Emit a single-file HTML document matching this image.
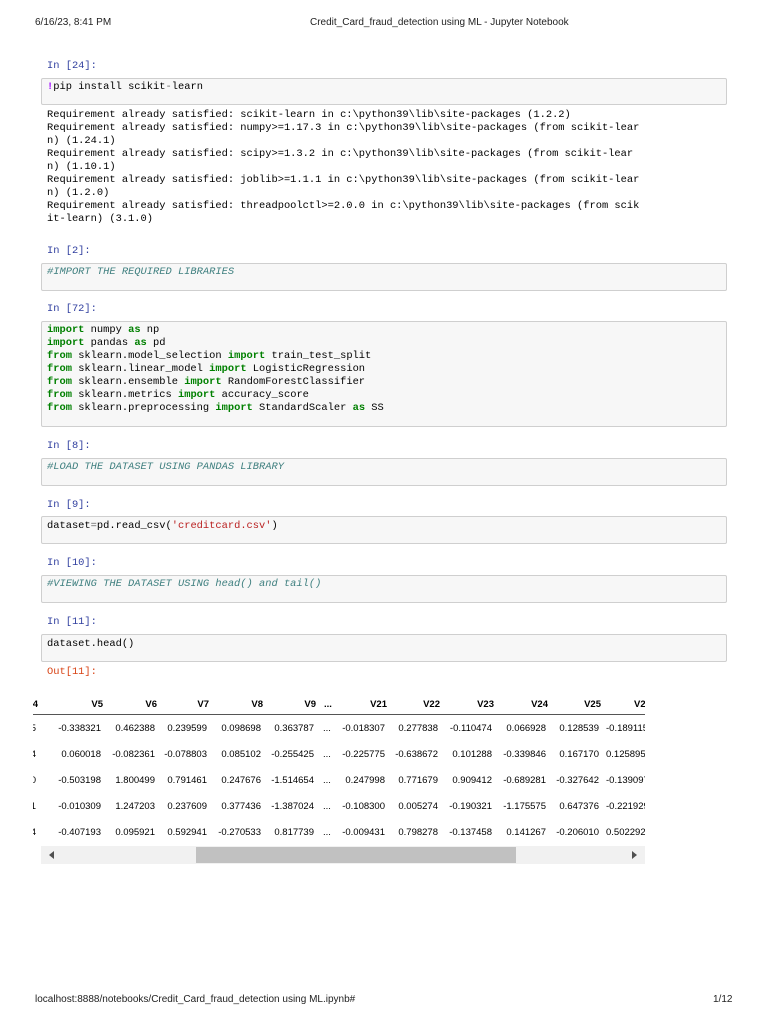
<!DOCTYPE html>
<html><head><meta charset="utf-8"><style>
body{margin:0;width:768px;height:1024px;background:#fff;position:relative;overflow:hidden;font-family:"Liberation Sans",sans-serif}
.a{position:absolute}
.hd{font-size:10px;color:#222;top:17px}
.lbl{position:absolute;left:47px;font-family:"Liberation Mono",monospace;font-size:10.4px;color:#303F9F;line-height:13px}
.box{position:absolute;left:41px;width:684px;border:1px solid #cfcfcf;background:#f7f7f7;border-radius:2px}
.code{position:absolute;left:47px;font-family:"Liberation Mono",monospace;font-size:10.4px;line-height:13px;color:#000;white-space:pre}
.k{color:#008000;font-weight:bold}.c{color:#408080;font-style:italic}.s{color:#BA2121}.p{color:#AA22FF;font-weight:bold}.o{color:#666}
table{border-collapse:collapse;font-size:9.5px;position:absolute;left:0;top:0;table-layout:fixed;width:668px}
td,th{text-align:right;height:26px;padding:0 2px 0 0;white-space:nowrap;overflow:hidden}
th{font-weight:bold;height:20px;border-bottom:1.5px solid #555;padding:0}
td:last-child{text-align:left;padding-left:5px}
th:last-child{text-align:left;padding-left:33px}
</style></head><body>
<div class="a hd" style="left:35px">6/16/23, 8:41 PM</div>
<div class="a hd" style="left:310px">Credit_Card_fraud_detection using ML - Jupyter Notebook</div>

<div class="lbl" style="top:60px">In [24]:</div>
<div class="box" style="top:78px;height:25px"></div>
<div class="code" style="top:81px"><span class="p">!</span>pip install scikit<span class="o">-</span>learn</div>
<div class="code" style="top:109px">Requirement already satisfied: scikit-learn in c:\python39\lib\site-packages (1.2.2)
Requirement already satisfied: numpy>=1.17.3 in c:\python39\lib\site-packages (from scikit-lear
n) (1.24.1)
Requirement already satisfied: scipy>=1.3.2 in c:\python39\lib\site-packages (from scikit-lear
n) (1.10.1)
Requirement already satisfied: joblib>=1.1.1 in c:\python39\lib\site-packages (from scikit-lear
n) (1.2.0)
Requirement already satisfied: threadpoolctl>=2.0.0 in c:\python39\lib\site-packages (from scik
it-learn) (3.1.0)</div>

<div class="lbl" style="top:245px">In [2]:</div>
<div class="box" style="top:263px;height:26px"></div>
<div class="code c" style="top:266px">#IMPORT THE REQUIRED LIBRARIES</div>

<div class="lbl" style="top:303px">In [72]:</div>
<div class="box" style="top:321px;height:104px"></div>
<div class="code" style="top:324px"><span class="k">import</span> numpy <span class="k">as</span> np
<span class="k">import</span> pandas <span class="k">as</span> pd
<span class="k">from</span> sklearn.model_selection <span class="k">import</span> train_test_split
<span class="k">from</span> sklearn.linear_model <span class="k">import</span> LogisticRegression
<span class="k">from</span> sklearn.ensemble <span class="k">import</span> RandomForestClassifier
<span class="k">from</span> sklearn.metrics <span class="k">import</span> accuracy_score
<span class="k">from</span> sklearn.preprocessing <span class="k">import</span> StandardScaler <span class="k">as</span> SS</div>

<div class="lbl" style="top:440px">In [8]:</div>
<div class="box" style="top:458px;height:26px"></div>
<div class="code c" style="top:461px">#LOAD THE DATASET USING PANDAS LIBRARY</div>

<div class="lbl" style="top:499px">In [9]:</div>
<div class="box" style="top:516px;height:26px"></div>
<div class="code" style="top:520px">dataset<span class="o">=</span>pd.read_csv(<span class="s">'creditcard.csv'</span>)</div>

<div class="lbl" style="top:557px">In [10]:</div>
<div class="box" style="top:575px;height:26px"></div>
<div class="code c" style="top:578px">#VIEWING THE DATASET USING head() and tail()</div>

<div class="lbl" style="top:616px">In [11]:</div>
<div class="box" style="top:634px;height:26px"></div>
<div class="code" style="top:638px">dataset.head()</div>
<div class="lbl" style="top:666px;color:#D84315">Out[11]:</div>

<div class="a" style="left:33px;top:694px;width:612px;height:150px;overflow:hidden">
<table style="left:-30px">
<colgroup><col style="width:35px"><col style="width:65px"><col style="width:54px"><col style="width:52px"><col style="width:54px"><col style="width:53px"><col style="width:24px"><col style="width:47px"><col style="width:53px"><col style="width:54px"><col style="width:54px"><col style="width:53px"><col style="width:70px"></colgroup>
<tr><th>V4</th><th>V5</th><th>V6</th><th>V7</th><th>V8</th><th>V9</th><th style="text-align:center">...</th><th>V21</th><th>V22</th><th>V23</th><th>V24</th><th>V25</th><th>V26</th></tr>
<tr><td>0.065</td><td>-0.338321</td><td>0.462388</td><td>0.239599</td><td>0.098698</td><td>0.363787</td><td style="text-align:center">...</td><td>-0.018307</td><td>0.277838</td><td>-0.110474</td><td>0.066928</td><td>0.128539</td><td>-0.189115</td></tr>
<tr><td>0.154</td><td>0.060018</td><td>-0.082361</td><td>-0.078803</td><td>0.085102</td><td>-0.255425</td><td style="text-align:center">...</td><td>-0.225775</td><td>-0.638672</td><td>0.101288</td><td>-0.339846</td><td>0.167170</td><td>0.125895</td></tr>
<tr><td>0.380</td><td>-0.503198</td><td>1.800499</td><td>0.791461</td><td>0.247676</td><td>-1.514654</td><td style="text-align:center">...</td><td>0.247998</td><td>0.771679</td><td>0.909412</td><td>-0.689281</td><td>-0.327642</td><td>-0.139097</td></tr>
<tr><td>0.891</td><td>-0.010309</td><td>1.247203</td><td>0.237609</td><td>0.377436</td><td>-1.387024</td><td style="text-align:center">...</td><td>-0.108300</td><td>0.005274</td><td>-0.190321</td><td>-1.175575</td><td>0.647376</td><td>-0.221929</td></tr>
<tr><td>0.404</td><td>-0.407193</td><td>0.095921</td><td>0.592941</td><td>-0.270533</td><td>0.817739</td><td style="text-align:center">...</td><td>-0.009431</td><td>0.798278</td><td>-0.137458</td><td>0.141267</td><td>-0.206010</td><td>0.502292</td></tr>
</table></div>

<div class="a" style="left:41px;top:846px;width:604px;height:18px;background:#f1f1f1"></div>
<div class="a" style="left:196px;top:847px;width:320px;height:16px;background:#c1c1c1"></div>
<div class="a" style="left:49px;top:851px;width:0;height:0;border-top:4px solid transparent;border-bottom:4px solid transparent;border-right:5px solid #505050"></div>
<div class="a" style="left:632px;top:851px;width:0;height:0;border-top:4px solid transparent;border-bottom:4px solid transparent;border-left:5px solid #505050"></div>

<div class="a hd" style="left:35px;top:994px">localhost:8888/notebooks/Credit_Card_fraud_detection using ML.ipynb#</div>
<div class="a hd" style="left:713px;top:994px">1/12</div>
</body></html>
